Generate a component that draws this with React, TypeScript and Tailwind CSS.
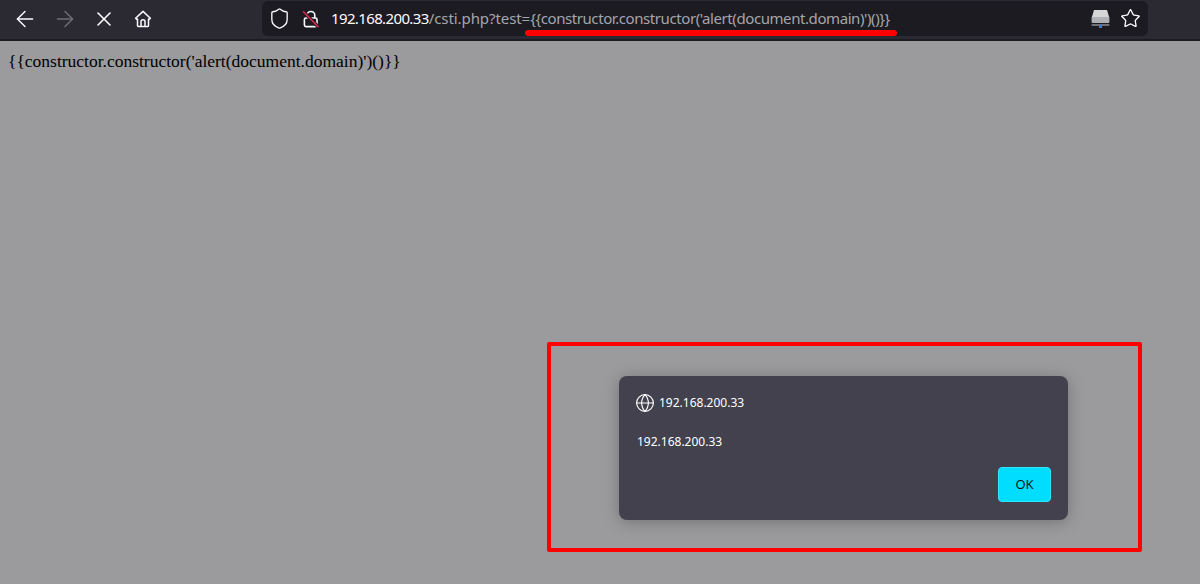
import { ArrowLeft, ArrowRight, Globe, Shield, Star, X } from 'lucide-react';

const HOST = '192.168.200.33';

function HomeIcon() {
  return (
    <svg width="18" height="18" viewBox="0 0 18 18" fill="none" stroke="#fbfbfe" strokeWidth="1.5" strokeLinejoin="round">
      <path d="M1.6 8.2 9 1.4l7.4 6.8-1.3 1.3-.6-.5v6.4a1.2 1.2 0 0 1-1.2 1.2H4.7a1.2 1.2 0 0 1-1.2-1.2V9l-.6.5z" />
      <path d="M7 16.4v-4.6a2 2 0 0 1 4 0v4.6" />
    </svg>
  );
}

function BrokenLockIcon() {
  return (
    <svg width="16" height="18" viewBox="0 0 16 18" fill="none" className="overflow-visible">
      <path d="M4 8V5.4a3.9 3.9 0 0 1 7.8 0V8" stroke="#fbfbfe" strokeWidth="1.6" />
      <rect x="1.4" y="8" width="12.6" height="8.6" rx="1.6" stroke="#fbfbfe" strokeWidth="1.6" />
      <path d="M0 1.2 15.4 17" stroke="#1c1b22" strokeWidth="3.4" />
      <path d="M0 1.2 15.4 17" stroke="#e22850" strokeWidth="1.6" />
    </svg>
  );
}

function DriveIcon() {
  return (
    <svg width="19" height="20" viewBox="0 0 19 20">
      <path d="M3 1h13l2.4 8H.6z" fill="#d5d6d8" />
      <rect x="0.6" y="8" width="17.8" height="6" rx="1" fill="#aeb0b3" />
      <rect x="0.6" y="15" width="17.8" height="2" fill="#6f7174" />
      <rect x="8" y="15" width="3" height="4" fill="#2f7fe0" />
    </svg>
  );
}

export default function App() {
  return (
    <div className="relative h-[584px] w-[1200px] overflow-hidden bg-[#9b9a9c] font-['Noto_Sans',sans-serif]">
      {/* Browser toolbar */}
      <div className="flex h-[41px] items-center border-b-2 border-[#1c1b22] bg-[#2b2a33] pb-0.5">
        <div className="flex w-[262px] items-center pl-[12px] text-[#fbfbfe]">
          <ArrowLeft size={26} strokeWidth={1.3} />
          <ArrowRight size={26} strokeWidth={1.3} className="ml-[14px] text-[#6f6e75]" />
          <X size={24} strokeWidth={1.6} className="ml-[14px]" />
          <span className="ml-[18px] flex">
            <HomeIcon />
          </span>
        </div>
        <div className="flex h-[35px] w-[886px] items-center rounded-md bg-[#1c1b22] pl-[6px] pr-[7px] text-[#fbfbfe]">
          <Shield size={23} strokeWidth={1.4} />
          <span className="ml-[12px] flex">
            <BrokenLockIcon />
          </span>
          <div className="ml-[12px] whitespace-nowrap text-[15px] text-[#a6a5ab]">
            <span className="tracking-[-0.63px] text-[#fbfbfe]">{HOST}</span>
            <span className="tracking-[-0.07px]">/csti.php?test=</span>
            <span className="tracking-[-0.42px]">{"{{constructor.constructor('alert(document.domain)')()}}"}</span>
          </div>
          <div className="ml-auto flex items-center gap-[10px]">
            <DriveIcon />
            <Star size={21} strokeWidth={1.5} />
          </div>
        </div>
      </div>

      {/* Page body */}
      <p className="pl-[8px] pt-[10px] font-['Liberation_Serif',serif] text-[17.5px] leading-[21px] text-black">
        {"{{constructor.constructor('alert(document.domain)')()}}"}
      </p>

      {/* Alert dialog */}
      <div className="absolute left-[619px] top-[376px] flex h-[144px] w-[449px] flex-col rounded-lg bg-[#42414d] pl-[18px] pr-[17px] text-white shadow-[0_2px_16px_rgba(0,0,0,0.25)]">
        <div className="mt-[17px] -ml-[2px] flex items-center gap-[4px] text-[12px] leading-[20px]">
          <Globe size={20} strokeWidth={1.4} />
          <span>{HOST}</span>
        </div>
        <p className="mt-[20px] text-[12px] leading-[18px]">{HOST}</p>
        <button className="ml-auto mt-[16px] h-[35px] w-[53px] rounded border border-[#2ee6ff] bg-[#00ddff] text-[13px] text-[#15141a]">
          OK
        </button>
      </div>

      {/* Red annotations */}
      <div className="absolute left-[547px] top-[342px] h-[210px] w-[595px] rounded-[2px] border-4 border-[#ff0000]" />
      <div className="absolute left-[525px] top-[30px] h-[6px] w-[372px] rounded-[3px] bg-[#ff0000]" />
    </div>
  );
}
